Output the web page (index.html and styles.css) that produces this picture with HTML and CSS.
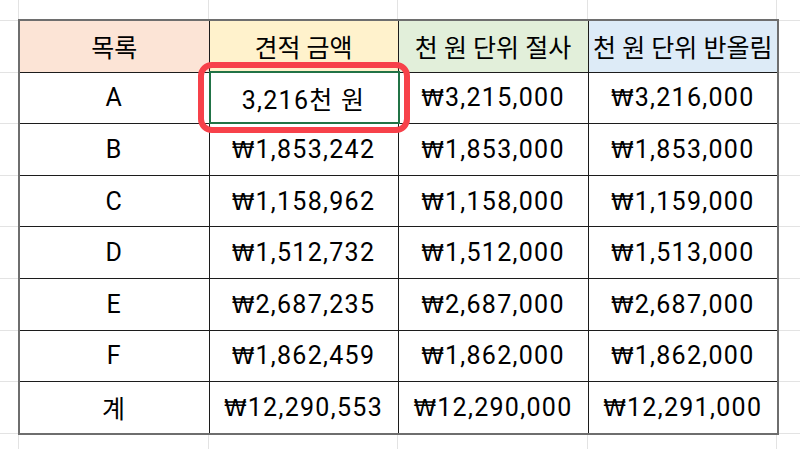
FILE: index.html
```html
<!DOCTYPE html>
<html lang="ko">
<head>
<meta charset="utf-8">
<link rel="stylesheet" href="styles.css">
</head>
<body>
<div class="sheet">
  <table class="grid">
    <colgroup>
      <col class="c1"><col class="c2"><col class="c3"><col class="c4">
    </colgroup>
    <thead>
      <tr>
        <th class="h-peach">목록</th>
        <th class="h-yellow">견적 금액</th>
        <th class="h-green">천 원 단위 절사</th>
        <th class="h-blue">천 원 단위 반올림</th>
      </tr>
    </thead>
    <tbody>
      <tr><td>A</td><td class="selected">3,216천 원</td><td><span class="won">₩</span>3,215,000</td><td><span class="won">₩</span>3,216,000</td></tr>
      <tr><td>B</td><td><span class="won">₩</span>1,853,242</td><td><span class="won">₩</span>1,853,000</td><td><span class="won">₩</span>1,853,000</td></tr>
      <tr><td>C</td><td><span class="won">₩</span>1,158,962</td><td><span class="won">₩</span>1,158,000</td><td><span class="won">₩</span>1,159,000</td></tr>
      <tr><td>D</td><td><span class="won">₩</span>1,512,732</td><td><span class="won">₩</span>1,512,000</td><td><span class="won">₩</span>1,513,000</td></tr>
      <tr><td>E</td><td><span class="won">₩</span>2,687,235</td><td><span class="won">₩</span>2,687,000</td><td><span class="won">₩</span>2,687,000</td></tr>
      <tr><td>F</td><td><span class="won">₩</span>1,862,459</td><td><span class="won">₩</span>1,862,000</td><td><span class="won">₩</span>1,862,000</td></tr>
      <tr><td>계</td><td><span class="won">₩</span>12,290,553</td><td><span class="won">₩</span>12,290,000</td><td><span class="won">₩</span>12,291,000</td></tr>
    </tbody>
  </table>
</div>
</body>
</html>
```
FILE: styles.css
```css
html, body {
  margin: 0;
  padding: 0;
}
body {
  width: 800px;
  height: 449px;
  overflow: hidden;
  background-color: #ffffff;
  background-image:
    linear-gradient(#e3e3e3, #e3e3e3),
    linear-gradient(#e3e3e3, #e3e3e3),
    linear-gradient(#e3e3e3, #e3e3e3),
    linear-gradient(#e3e3e3, #e3e3e3),
    linear-gradient(#e3e3e3, #e3e3e3),
    repeating-linear-gradient(to bottom, #e3e3e3 0, #e3e3e3 1px, transparent 1px, transparent 51.625px);
  background-size: 1px 100%, 1px 100%, 1px 100%, 1px 100%, 1px 100%, 100% 100%;
  background-position: 18px 0, 208px 0, 397px 0, 587px 0, 776px 0, 0 20px;
  background-repeat: no-repeat, no-repeat, no-repeat, no-repeat, no-repeat, repeat-y;
  font-family: Roboto, "Noto Sans", "Noto Sans CJK KR", sans-serif;
  color: #000;
}
.sheet {
  padding: 19px 0 0 18px;
}
.grid {
  border-collapse: collapse;
  table-layout: fixed;
  width: 759px;
  border: 2px solid #6e6e6e;
  background: #fff;
}
.c1 { width: 190px; }
.c2 { width: 189px; }
.c3 { width: 190px; }
.c4 { width: 190px; }
.grid th,
.grid td {
  height: 50.6px;
  padding: 0;
  border: 1px solid #1c1c1c;
  text-align: center;
  vertical-align: middle;
  font-size: 25px;
  font-weight: 400;
  white-space: nowrap;
  overflow: visible;
}
.grid th {
  letter-spacing: 0;
}
.grid td {
  letter-spacing: 1.3px;
}
.won {
  font-family: "DejaVu Sans", sans-serif;
  font-weight: 400;
  font-size: 23px;
  letter-spacing: 1px;
}
.grid thead th {
  border-top: 2px solid #6e6e6e;
}
.grid tr > :first-child { border-left: 2px solid #6e6e6e; }
.grid tr > :last-child { border-right: 2px solid #6e6e6e; }
.grid tbody tr:last-child td { border-bottom: 2px solid #6e6e6e; }
.h-peach { background: #fce4d6; }
.h-yellow { background: #fff2cc; }
.h-green { background: #e2efda; }
.h-blue { background: #ddebf7; }
.selected {
  position: relative;
}
.selected::before {
  content: "";
  position: absolute;
  left: -1px;
  top: -2px;
  right: -2px;
  bottom: -1px;
  border: 2px solid #217346;
}
.selected::after {
  content: "";
  position: absolute;
  left: -12px;
  top: -11px;
  right: -12px;
  bottom: -10px;
  border: 6px solid #f7414a;
  border-radius: 14px;
}
```
